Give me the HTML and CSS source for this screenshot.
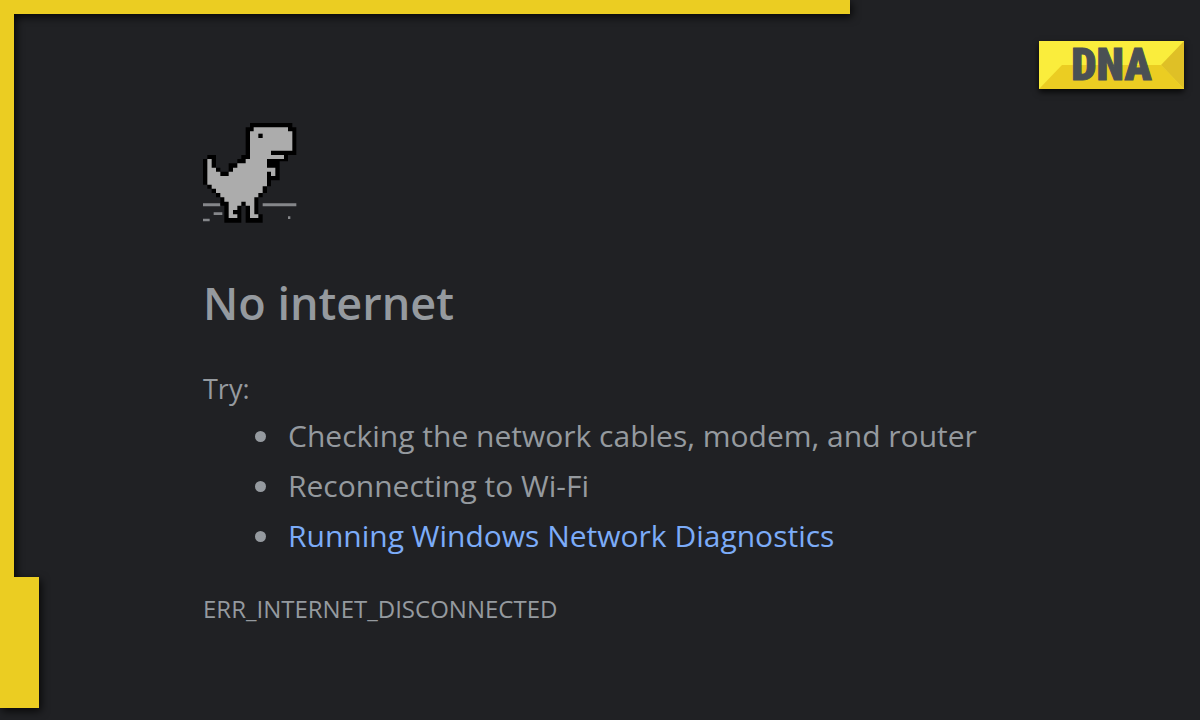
FILE: index.html
```html
<!DOCTYPE html>
<html lang="en">
<head>
    <meta charset="UTF-8">
    <meta name="viewport" content="width=device-width, initial-scale=1.0">
    <title>No internet</title>
    <link rel="stylesheet" href="styles.css">
</head>
<body>
    <div class="frame" aria-hidden="true">
        <div class="frame-top"></div>
        <div class="frame-side"></div>
        <div class="frame-block"></div>
    </div>

    <div class="brand">
        <svg class="brand-bg" viewBox="0 0 145 48" preserveAspectRatio="none" aria-hidden="true">
            <rect width="145" height="48" fill="#faed3c"/>
            <path d="M0 48L23 24H122L145 48z" fill="#ebcd22"/>
            <path d="M145 0L122 24L145 48z" fill="#dfc026"/>
        </svg>
        <span class="brand-name">DNA</span>
    </div>

    <main class="error-page">
        <svg class="dino" viewBox="23 23 282 300" aria-hidden="true">
            <!-- ground -->
            <path d="M23 264h52v9h-52zM202 264h101v9h-101zM55 291h26v8h-26zM23 310h20v8h-20zM278 303h7v8h-7z" fill="#85878a"/>
            <!-- outline -->
            <path d="M164 23H291V36H303V119H278V138H253V195H227V213H215V233H202V246H189V297H202V322H151V271H138V322H87V271H75V246H62V233H49V220H36V208H23V131H36V119H62V157H75V169H100V157H100V144H126V131H138V119H151V36H164Z" fill="#000"/>
            <!-- body -->
            <path d="M175 36H278V48H291V106H227V119H266V131H215V157H240V182H227V169H215V213H202V233H189V246H177V297H189V308H164V271H151V259H138V271H126V284H113V297H126V308H100V259H87V246H75V233H62V220H49V208H36V131H49V157H62V169H75V182H100V169H113V157H126V144H151V131H164V48H175Z" fill="#acacac"/>
            <rect x="189" y="55" width="13" height="13" fill="#000"/>
        </svg>

        <h1>No internet</h1>

        <p class="try">Try:</p>
        <ul class="suggestions">
            <li>Checking the network cables, modem, and router</li>
            <li>Reconnecting to Wi-Fi</li>
            <li><a href="#diagnostics">Running Windows Network Diagnostics</a></li>
        </ul>

        <p class="error-code">ERR_INTERNET_DISCONNECTED</p>
    </main>
</body>
</html>
```
FILE: styles.css
```css
* {
    margin: 0;
    padding: 0;
    box-sizing: border-box;
}

body {
    position: relative;
    min-height: 100vh;
    background: #202124;
    color: #959a9f;
    font-family: 'Segoe UI', 'Open Sans', 'Noto Sans', sans-serif;
}

/* Yellow border along the top and left edges */
.frame {
    position: absolute;
    inset: 0;
    display: flex;
    flex-direction: column;
    padding-bottom: 12px;
    pointer-events: none;
    filter: drop-shadow(2px 3px 4px rgba(0, 0, 0, 0.8));
}

.frame-top,
.frame-side,
.frame-block {
    background: #ebcd22;
}

.frame-top {
    width: 70.8%;
    height: 14px;
}

.frame-side {
    flex: 1;
    width: 14px;
}

.frame-block {
    width: 39px;
    height: 131px;
}

.brand {
    position: absolute;
    top: 41px;
    right: 16px;
    width: 145px;
    height: 48px;
    display: flex;
    align-items: center;
    justify-content: center;
    box-shadow: 0 3px 6px rgba(0, 0, 0, 0.8);
}

.brand-bg {
    position: absolute;
    inset: 0;
    width: 100%;
    height: 100%;
}

.brand-name {
    position: relative;
    color: #4a5054;
    font-family: 'Roboto Condensed', 'Liberation Sans Narrow', 'Liberation Sans', sans-serif;
    font-size: 45px;
    font-weight: 900;
    line-height: 48px;
    -webkit-text-stroke: 1px #4a5054;
}

.error-page {
    padding: 123px 48px 48px 203px;
}

.dino {
    display: block;
    width: 94px;
    height: 100px;
}

h1 {
    margin-top: 48px;
    font-size: 45px;
    font-weight: 600;
    line-height: 64px;
}

.try {
    margin-top: 32px;
    font-size: 27px;
    line-height: 44px;
}

.suggestions {
    padding-left: 80px;
    font-size: 30px;
    line-height: 50px;
}

.suggestions li {
    padding-left: 5px;
}

.suggestions a {
    color: #7cacf8;
    text-decoration: none;
}

.suggestions a:hover {
    text-decoration: underline;
}

.error-code {
    margin-top: 30px;
    font-size: 24px;
    line-height: 36px;
}
```
